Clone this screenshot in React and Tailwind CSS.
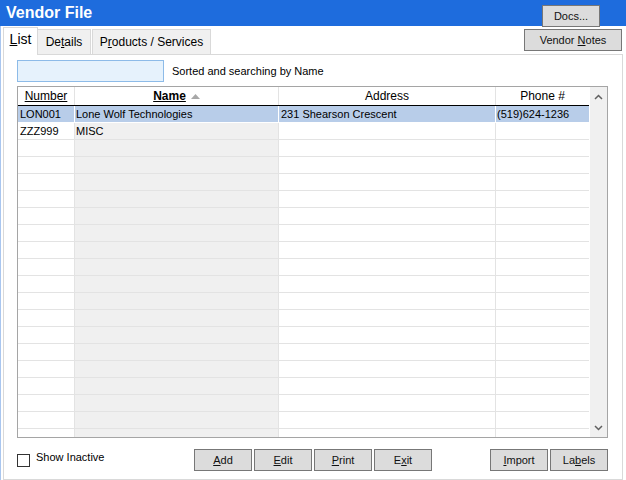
import React from "react";

function Btn({ children, w = "w-[58px]", extra = "" }) {
  return (
    <div
      className={`flex items-center justify-center h-[22px] ${w} bg-[#dcdcdc] border border-[#777777] text-[11px] leading-none text-[#111] ${extra}`}
    >
      {children}
    </div>
  );
}

function ChevUp() {
  return (
    <svg width="9" height="6" viewBox="0 0 9 6">
      <path d="M1 5 L4.5 1.5 L8 5" fill="none" stroke="#606060" strokeWidth="1.5" />
    </svg>
  );
}
function ChevDown() {
  return (
    <svg width="9" height="6" viewBox="0 0 9 6">
      <path d="M1 1 L4.5 4.5 L8 1" fill="none" stroke="#606060" strokeWidth="1.5" />
    </svg>
  );
}

const rows = [
  { n: "LON001", name: "Lone Wolf Technologies", addr: "231 Shearson Crescent", phone: "(519)624-1236", sel: true },
  { n: "ZZZ999", name: "MISC", addr: "", phone: "" },
];
for (let i = 0; i < 18; i++) rows.push({ n: "", name: "", addr: "", phone: "" });

export default function App() {
  return (
    <div className="w-[626px] h-[480px] bg-white overflow-hidden font-['Liberation_Sans',Arial,sans-serif] text-black flex flex-col">
      {/* Title bar */}
      <div className="h-[26px] shrink-0 bg-[#1e6cdd] flex items-start justify-between">
        <div className="pl-[6px] h-[26px] flex items-center text-white font-bold text-[16px] leading-none">
          Vendor File
        </div>
        <Btn w="w-[58px]" extra="mt-[5px] mr-[26px] relative z-10">Docs...</Btn>
      </div>

      {/* Body */}
      <div className="flex-1 border-l border-[#a9c6ef] flex flex-col">
        {/* Tabs row */}
        <div className="h-[28px] flex items-end pl-[2px]">
          <div className="relative z-10 -mb-px h-[28px] w-[35px] bg-white border border-b-0 border-[#d9d9d9] flex items-start justify-center pt-[4px] text-[14px] leading-none">
            <span><u>L</u>ist</span>
          </div>
          <div className="h-[25px] w-[53px] bg-[#f0f0f0] border border-b-0 border-l-0 border-[#d9d9d9] flex items-center justify-center text-[12px] leading-none">
            <span>De<u>t</u>ails</span>
          </div>
          <div className="ml-[1px] h-[25px] w-[119px] bg-[#f0f0f0] border border-b-0 border-[#d9d9d9] flex items-center justify-center text-[12px] leading-none">
            <span>P<u>r</u>oducts / Services</span>
          </div>
          <div className="ml-auto mr-[4px] self-start mt-[3px]">
            <Btn w="w-[98px]">
              <span>Vendor <u>N</u>otes</span>
            </Btn>
          </div>
        </div>

        {/* Panel */}
        <div className="ml-[2px] w-[620px] h-[426px] border border-[#d9d9d9] flex flex-col">
          {/* Search row */}
          <div className="mt-[5px] pl-[13px] flex items-center">
            <div className="w-[147px] h-[22px] bg-[#e6f2fc] border border-[#8dbbe8]" />
            <span className="ml-[8px] text-[11px] leading-none">Sorted and searching by Name</span>
          </div>

          {/* Grid */}
          <div className="mt-[4px] ml-[13px] w-[591px] h-[352px] border border-[#a5a5a5] flex overflow-hidden">
            <div className="w-[571px] flex flex-col overflow-hidden">
              {/* Header */}
              <div className="flex h-[19px] shrink-0 border-b border-black text-[12px] leading-[18px]">
                <div className="w-[57px] border-r border-[#e3e3e3] text-center">
                  <span className="underline">Number</span>
                </div>
                <div className="w-[204px] border-r border-[#e3e3e3] flex items-center justify-center">
                  <span className="font-bold underline">Name</span>
                  <svg className="ml-[5px]" width="9" height="5" viewBox="0 0 9 5">
                    <path d="M0 5 L4.5 0 L9 5 Z" fill="#a8a8a8" />
                  </svg>
                </div>
                <div className="w-[217px] border-r border-[#e3e3e3] text-center">Address</div>
                <div className="w-[93px] text-center">Phone #</div>
              </div>
              {/* Rows */}
              {rows.map((r, i) => {
                const cellBase = r.sel
                  ? "bg-[#b8cde9] border-white"
                  : "border-[#e3e3e3]";
                return (
                  <div key={i} className="flex h-[17px] shrink-0 text-[11px] leading-[16px]">
                    <div className={`w-[57px] h-[17px] border-r border-b pl-[2px] whitespace-nowrap overflow-hidden ${cellBase} ${r.sel ? "" : "bg-white"}`}>
                      {r.n}
                    </div>
                    <div className={`w-[204px] h-[17px] border-r border-b pl-[1px] whitespace-nowrap overflow-hidden ${cellBase} ${r.sel ? "" : "bg-[#f0f0f0]"}`}>
                      {r.name}
                    </div>
                    <div className={`w-[217px] h-[17px] border-r border-b pl-[2px] whitespace-nowrap overflow-hidden ${cellBase} ${r.sel ? "" : "bg-white"}`}>
                      {r.addr}
                    </div>
                    <div className={`w-[93px] h-[17px] border-b pl-[1px] whitespace-nowrap overflow-hidden ${cellBase} ${r.sel ? "" : "bg-white"}`}>
                      {r.phone}
                    </div>
                  </div>
                );
              })}
            </div>
            {/* Scrollbar */}
            <div className="w-[18px] border-l border-white bg-[#f0f0f0] flex flex-col items-center justify-between pt-[7px] pb-[6px]">
              <ChevUp />
              <ChevDown />
            </div>
          </div>

          {/* Bottom row */}
          <div className="mt-[11px] pl-[13px] flex items-start">
            <div className="w-[177px] flex items-start">
              <div className="mt-[5px] w-[13px] h-[13px] border border-[#333333] bg-white" />
              <span className="ml-[6px] mt-[3px] text-[11px] leading-none">Show Inactive</span>
            </div>
            <div className="flex gap-[2px]">
              <Btn><span><u>A</u>dd</span></Btn>
              <Btn><span><u>E</u>dit</span></Btn>
              <Btn><span><u>P</u>rint</span></Btn>
              <Btn><span>E<u>x</u>it</span></Btn>
            </div>
            <div className="ml-[58px] flex gap-[2px]">
              <Btn><span><u>I</u>mport</span></Btn>
              <Btn><span>La<u>b</u>els</span></Btn>
            </div>
          </div>
        </div>
      </div>
    </div>
  );
}
